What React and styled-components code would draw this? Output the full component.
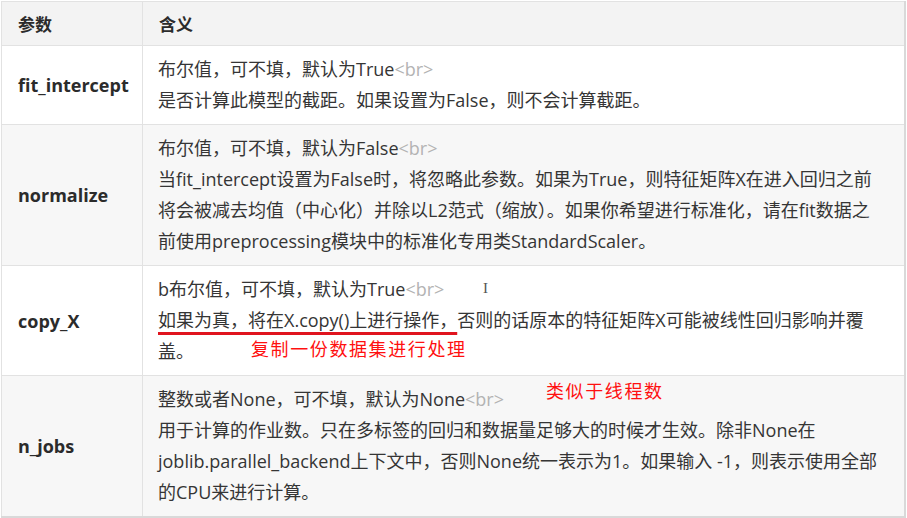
import React from "react";
import styled, { createGlobalStyle } from "styled-components";

const GlobalStyle = createGlobalStyle`
  html, body {
    margin: 0;
    padding: 0;
    background: #ffffff;
  }
  body {
    font-family: "Open Sans", "Noto Sans CJK SC", sans-serif;
    color: #333333;
  }
`;

const Page = styled.div`
  padding: 1px 1px 3px 1px;
`;

const Table = styled.table`
  width: 905px;
  border-collapse: collapse;
  border: 1px solid #d9d9d9;
  border-right-width: 2px;
  border-bottom-width: 2px;
`;

const HeadCell = styled.th`
  height: 43px;
  padding: 0 14px 0 16px;
  background: #f3f3f3;
  border: 1px solid #e2e2e2;
  text-align: left;
  font-size: 17px;
  font-weight: 700;
  color: #2b2b2b;
  width: ${(p) => (p.$narrow ? "110px" : "auto")};
`;

const Row = styled.tr`
  background: ${(p) => (p.$striped ? "#f7f7f7" : "#ffffff")};
`;

const NameCell = styled.td`
  padding: 8px 12px 8px 16px;
  border: 1px solid #e2e2e2;
  font-size: 18px;
  font-weight: 700;
  color: #2b2b2b;
  vertical-align: middle;
  white-space: nowrap;
`;

const TextCell = styled.td`
  position: relative;
  padding: 8px 15px;
  border: 1px solid #e2e2e2;
  font-size: 18px;
  line-height: 31px;
  color: #353535;
  vertical-align: top;
  white-space: nowrap;
`;

const Tag = styled.span`
  color: #b3b3b3;
`;

const Marked = styled.span`
  text-decoration: underline;
  text-decoration-color: #e0141e;
  text-decoration-thickness: 3px;
  text-underline-offset: 5px;
`;

const Note = styled.span`
  position: absolute;
  left: ${(p) => p.$x}px;
  top: ${(p) => p.$y}px;
  font-family: "Noto Sans CJK SC", sans-serif;
  font-size: 18px;
  line-height: 20px;
  letter-spacing: 1.6px;
  color: #ff1010;
  white-space: nowrap;
`;

const Cursor = styled.span`
  position: absolute;
  left: 340px;
  top: 12px;
  font-family: "Liberation Serif", serif;
  font-size: 15px;
  line-height: 20px;
  color: #555555;
`;

const rows = [
  {
    name: "fit_intercept",
    body: (
      <>
        布尔值，可不填，默认为True<Tag>&lt;br&gt;</Tag>
        <br />
        是否计算此模型的截距。如果设置为False，则不会计算截距。
      </>
    ),
  },
  {
    name: "normalize",
    body: (
      <>
        布尔值，可不填，默认为False<Tag>&lt;br&gt;</Tag>
        <br />
        当fit_intercept设置为False时，将忽略此参数。如果为True，则特征矩阵X在进入回归之前
        <br />
        将会被减去均值（中心化）并除以L2范式（缩放）。如果你希望进行标准化，请在fit数据之
        <br />
        前使用preprocessing模块中的标准化专用类StandardScaler。
      </>
    ),
  },
  {
    name: "copy_X",
    body: (
      <>
        b布尔值，可不填，默认为True<Tag>&lt;br&gt;</Tag>
        <Cursor>I</Cursor>
        <br />
        <Marked>如果为真，将在X.copy()上进行操作，</Marked>
        否则的话原本的特征矩阵X可能被线性回归影响并覆
        <br />
        盖。
        <Note $x={108} $y={72}>复制一份数据集进行处理</Note>
      </>
    ),
  },
  {
    name: "n_jobs",
    body: (
      <>
        整数或者None，可不填，默认为None<Tag>&lt;br&gt;</Tag>
        <Note $x={403} $y={4}>类似于线程数</Note>
        <br />
        用于计算的作业数。只在多标签的回归和数据量足够大的时候才生效。除非None在
        <br />
        joblib.parallel_backend上下文中，否则None统一表示为1。如果输入 -1，则表示使用全部
        <br />
        的CPU来进行计算。
      </>
    ),
  },
];

const App = () => {
  return (
    <Page>
      <GlobalStyle />
      <Table>
        <thead>
          <tr>
            <HeadCell $narrow>参数</HeadCell>
            <HeadCell>含义</HeadCell>
          </tr>
        </thead>
        <tbody>
          {rows.map((r, i) => (
            <Row key={r.name} $striped={i % 2 === 1}>
              <NameCell>{r.name}</NameCell>
              <TextCell>{r.body}</TextCell>
            </Row>
          ))}
        </tbody>
      </Table>
    </Page>
  );
};

export default App;
